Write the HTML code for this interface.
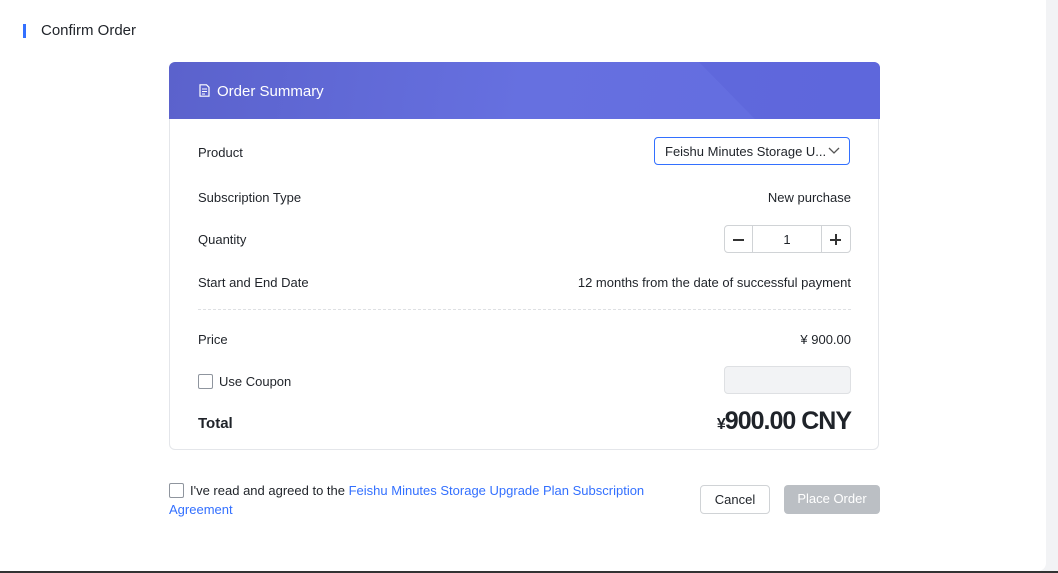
<!DOCTYPE html>
<html><head><style>
body{margin:0;width:1058px;height:573px;overflow:hidden;background:#f2f3f5;font-family:"Liberation Sans",sans-serif;color:#1f2329;position:relative}
.page{position:absolute;left:0;top:0;width:1046px;height:571px;background:#fff;border-radius:0 0 8px 0}
.bottom{position:absolute;left:0;top:571px;width:1058px;height:2px;background:#333}
.title{position:absolute;left:41px;top:22px;font-size:15px}
.bar{position:absolute;left:23px;top:24px;width:3px;height:14px;background:#3370ff}
.card{position:absolute;left:169px;top:62px;width:710px;height:388px;border:1px solid #e4e6ea;border-top:none;border-radius:6px;box-sizing:border-box}
.head{position:absolute;left:169px;top:62px;width:711px;height:57px;border-radius:6px 6px 0 0;background:linear-gradient(100deg,#5b62cc,#6670e0 50%,#636ce0);overflow:hidden}
.head .t{position:absolute;left:48px;top:21px;color:#fff;font-size:15px}
.lbl{position:absolute;left:198px;font-size:13px}
.r{position:absolute;right:207px;font-size:13px;text-align:right}
.sel{position:absolute;left:654px;top:137px;width:196px;height:28px;border:1px solid #3370ff;border-radius:4px;box-sizing:border-box;font-size:13px;padding:6px 10px}
.qty{position:absolute;left:724px;top:225px;width:127px;height:28px;border:1px solid #d0d3d6;border-radius:4px;box-sizing:border-box}
.cb{position:absolute;width:13px;height:13px;border:1px solid #8f959e;border-radius:2px}
.btn{position:absolute;top:485px;height:29px;border-radius:4px;box-sizing:border-box;font-size:13px;text-align:center;line-height:27px}
a{color:#3370ff;text-decoration:none}
</style></head><body>
<div class="page"></div><div class="bottom"></div>
<div class="bar"></div><div class="title">Confirm Order</div>
<div class="card"></div>
<div class="head"><svg style="position:absolute;left:530px;top:0" width="181" height="57"><polygon points="0,0 181,0 181,57 56,57" fill="#5c64d8" opacity=".6"/></svg>
<svg style="position:absolute;left:30px;top:22px" width="11" height="13" viewBox="0 0 11 13"><path d="M1 .8h6.5L10 3.3V12.2H1z" fill="none" stroke="#fff" stroke-width="1.2"/><path d="M3 5h5M3 7.5h5M3 10h3" stroke="#fff" stroke-width="1"/></svg>
<div class="t">Order Summary</div></div>
<div class="lbl" style="top:145px">Product</div>
<div class="sel">Feishu Minutes Storage U...<svg style="position:absolute;right:9px;top:9px" width="12" height="8"><path d="M1 1l5 5 5-5" fill="none" stroke="#555" stroke-width="1.3"/></svg></div>
<div class="lbl" style="top:190px">Subscription Type</div><div class="r" style="top:190px">New purchase</div>
<div class="lbl" style="top:232px">Quantity</div>
<div class="qty"><div style="position:absolute;left:27px;top:0;width:1px;height:26px;background:#d0d3d6"></div><div style="position:absolute;left:96px;top:0;width:1px;height:26px;background:#d0d3d6"></div>
<div style="position:absolute;left:8px;top:13px;width:11px;height:1.5px;background:#333"></div>
<div style="position:absolute;left:28px;width:68px;top:6px;text-align:center;font-size:13px">1</div>
<div style="position:absolute;left:105px;top:13px;width:11px;height:1.5px;background:#333"></div><div style="position:absolute;left:110px;top:8px;width:1.5px;height:11px;background:#333"></div></div>
<div class="lbl" style="top:275px">Start and End Date</div><div class="r" style="top:275px">12 months from the date of successful payment</div>
<div style="position:absolute;left:198px;top:309px;width:653px;border-top:1px dashed #dee0e3"></div>
<div class="lbl" style="top:332px">Price</div><div class="r" style="top:332px">¥ 900.00</div>
<div class="cb" style="left:198px;top:374px"></div><div class="lbl" style="left:219px;top:374px">Use Coupon</div>
<div style="position:absolute;left:724px;top:366px;width:127px;height:28px;background:#f2f3f5;border:1px solid #dee0e3;border-radius:4px;box-sizing:border-box"></div>
<div class="lbl" style="top:415px;font-size:15px;font-weight:bold">Total</div>
<div class="r" style="top:407px;font-size:25px;font-weight:bold;letter-spacing:-1px"><span style="font-size:16px">¥</span>900.00 CNY</div>
<div class="cb" style="left:169px;top:483px"></div>
<div style="position:absolute;left:169px;top:481px;width:490px;font-size:13px;line-height:19px;text-indent:21px">I've read and agreed to the <a>Feishu Minutes Storage Upgrade Plan Subscription Agreement</a></div>
<div class="btn" style="left:700px;width:70px;border:1px solid #d0d3d6">Cancel</div>
<div class="btn" style="left:784px;width:96px;background:#bbbfc4;color:#fff">Place Order</div>
</body></html>
